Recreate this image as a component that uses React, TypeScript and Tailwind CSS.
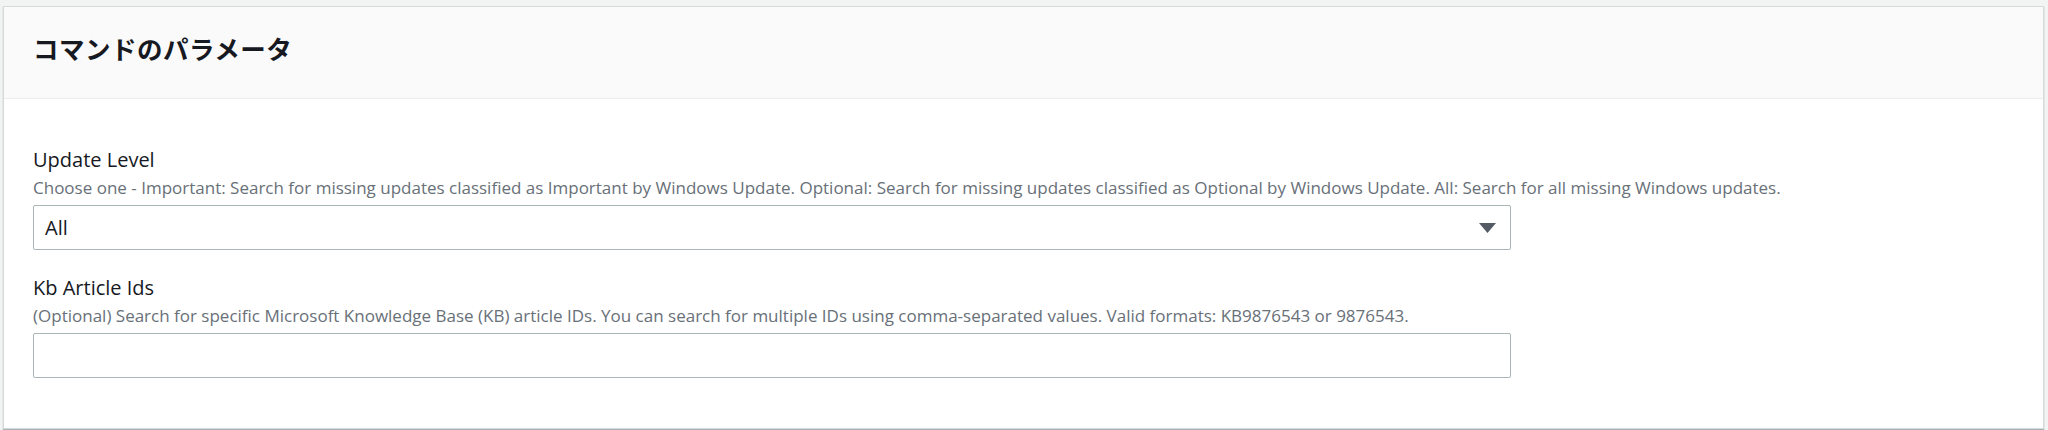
import React from 'react';

const font = { fontFamily: '"Open Sans", "Noto Sans CJK JP", sans-serif' };

const Field: React.FC<{ label: string; description: string; children: React.ReactNode; className?: string }> = ({
  label,
  description,
  children,
  className,
}) => (
  <div className={className}>
    <div className="text-[20px] leading-[28px] text-[#16191f]">{label}</div>
    <div className="mt-[3px] text-[17px] leading-[22px] text-[#687078]">{description}</div>
    <div className="mt-[6px]">{children}</div>
  </div>
);

export default function App() {
  return (
    <div className="w-[2048px] h-[430px] bg-[#f2f3f3] pt-[6px] pl-[3px] pr-[3px] overflow-hidden" style={font}>
      <div className="w-[2041px] bg-white border border-[#d5dbdb] shadow-[0_1px_1px_0_rgba(0,28,36,0.3)]">
        <div className="h-[92px] bg-[#fafafa] border-b border-[#eaeded] flex items-center px-[29px] pb-[6px]">
          <h2 className="text-[25.5px] font-bold text-[#16191f] tracking-[0.5px]">コマンドのパラメータ</h2>
        </div>
        <div className="px-[29px] pt-[47px] pb-[50px]">
          <Field
            label="Update Level"
            description="Choose one - Important: Search for missing updates classified as Important by Windows Update. Optional: Search for missing updates classified as Optional by Windows Update. All: Search for all missing Windows updates."
          >
            <div className="w-[1478px] h-[45px] border border-[#aab7b8] rounded-[2px] flex items-center justify-between pl-[11px] pr-[14px]">
              <span className="text-[20px] text-[#16191f]">All</span>
              <svg width="17" height="10" viewBox="0 0 17 10">
                <path d="M0 0 L17 0 L8.5 10 Z" fill="#545b64" />
              </svg>
            </div>
          </Field>
          <Field
            className="mt-[24px]"
            label="Kb Article Ids"
            description="(Optional) Search for specific Microsoft Knowledge Base (KB) article IDs. You can search for multiple IDs using comma-separated values. Valid formats: KB9876543 or 9876543."
          >
            <input
              type="text"
              className="block w-[1478px] h-[45px] border border-[#aab7b8] rounded-[2px] bg-white outline-none px-[11px] text-[20px]"
            />
          </Field>
        </div>
      </div>
    </div>
  );
}
